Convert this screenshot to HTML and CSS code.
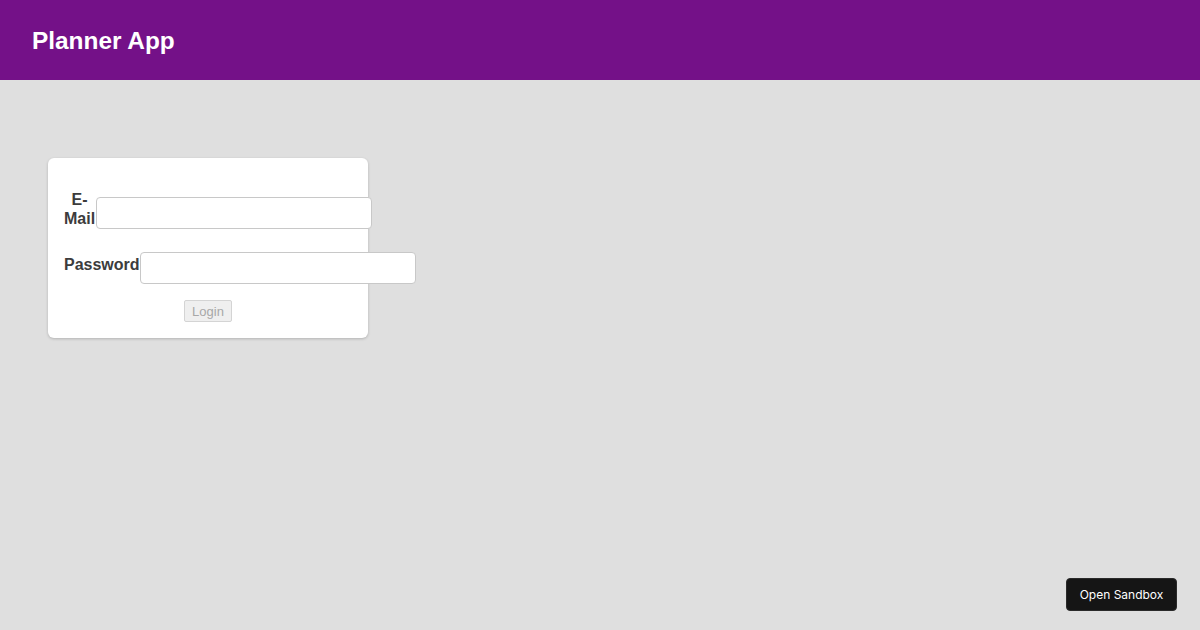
FILE: index.html
```html
<!DOCTYPE html>
<html lang="en">
<head>
    <meta charset="UTF-8">
    <meta name="viewport" content="width=device-width, initial-scale=1.0">
    <title>Planner App</title>
    <link rel="stylesheet" href="styles.css">
</head>
<body>
    <header class="topbar">
        <h1>Planner App</h1>
    </header>

    <main class="content">
        <form class="login-card">
            <div class="field">
                <label class="label-email" for="email">E-Mail</label>
                <input type="email" id="email">
            </div>
            <div class="field">
                <label for="password">Password</label>
                <input type="password" id="password">
            </div>
            <div class="actions">
                <button type="submit" disabled>Login</button>
            </div>
        </form>
    </main>

    <button class="sandbox-btn">Open Sandbox</button>
</body>
</html>
```

FILE: styles.css
```css
body {
    margin: 0;
    height: 630px;
    background-color: #dfdfdf;
    font-family: "Liberation Sans", Arial, sans-serif;
    overflow: hidden;
}

.topbar {
    height: 80px;
    box-sizing: border-box;
    background-color: #741188;
    display: flex;
    align-items: center;
    padding: 2px 32px 0;
}

.topbar h1 {
    margin: 0;
    color: #fff;
    font-size: 24.4px;
    font-weight: bold;
}

.content {
    padding: 78px 48px;
}

.login-card {
    width: 288px;
    height: 132px;
    padding: 32px 16px 16px;
    background: #fff;
    border-radius: 6px;
    box-shadow: 0 1px 3px rgba(0, 0, 0, 0.2);
}

.field {
    display: flex;
    align-items: center;
    margin-bottom: 16px;
}

.field label {
    font-size: 16px;
    font-weight: bold;
    color: #3c3c3c;
    text-align: center;
    line-height: 19px;
    margin-bottom: 8px;
}

.label-email {
    padding-right: 1px;
}

.field input {
    flex: none;
    width: 276px;
    height: 32px;
    box-sizing: border-box;
    border: 1px solid #c8c8c8;
    border-radius: 4px;
    padding: 0 8px;
    font-size: 14px;
}

.actions {
    display: flex;
    justify-content: center;
}

.actions button {
    font-family: "Liberation Sans", Arial, sans-serif;
    font-size: 13px;
    width: 48px;
    height: 22px;
    padding: 0;
    color: #a8a8a8;
    background: #efefef;
    border: 1px solid #d4d4d4;
    border-radius: 2px;
}

.sandbox-btn {
    position: fixed;
    right: 23px;
    bottom: 19px;
    width: 111px;
    height: 33px;
    background: #151515;
    color: #fff;
    border: 1px solid #2a2a2a;
    border-radius: 4px;
    font-family: "Inter", "Liberation Sans", sans-serif;
    font-size: 12px;
}
```
